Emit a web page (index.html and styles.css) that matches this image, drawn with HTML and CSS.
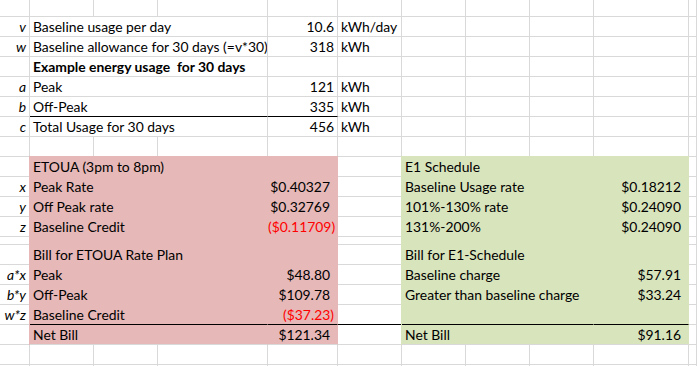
FILE: index.html
```html
<!DOCTYPE html>
<html>
<head>
<meta charset="utf-8">
<link rel="stylesheet" href="styles.css">
</head>
<body>
<div class="sheet">
  <!-- row 0 (partial) -->
  <div class="c"></div><div class="c"></div><div class="c"></div><div class="c"></div><div class="c"></div><div class="c"></div><div class="c"></div><div class="c"></div><div class="c"></div><div class="c"></div><div class="c"></div>

  <div class="c lbl">v</div><div class="c txt span3">Baseline usage per day</div><div class="c num">10.6</div><div class="c txt">kWh/day</div><div class="c"></div><div class="c"></div><div class="c"></div><div class="c"></div><div class="c"></div>

  <div class="c lbl">w</div><div class="c txt span3">Baseline allowance for 30 days (=v*30)</div><div class="c num">318</div><div class="c txt">kWh</div><div class="c"></div><div class="c"></div><div class="c"></div><div class="c"></div><div class="c"></div>

  <div class="c lbl"></div><div class="c txt span3 bold">Example energy usage&nbsp; for 30 days</div><div class="c num"></div><div class="c"></div><div class="c"></div><div class="c"></div><div class="c"></div><div class="c"></div><div class="c"></div>

  <div class="c lbl">a</div><div class="c txt span3">Peak</div><div class="c num">121</div><div class="c txt">kWh</div><div class="c"></div><div class="c"></div><div class="c"></div><div class="c"></div><div class="c"></div>

  <div class="c lbl">b</div><div class="c txt span3 under">Off-Peak</div><div class="c num under">335</div><div class="c txt">kWh</div><div class="c"></div><div class="c"></div><div class="c"></div><div class="c"></div><div class="c"></div>

  <div class="c lbl">c</div><div class="c txt span3">Total Usage for 30 days</div><div class="c num">456</div><div class="c txt">kWh</div><div class="c"></div><div class="c"></div><div class="c"></div><div class="c"></div><div class="c"></div>

  <div class="c"></div><div class="c"></div><div class="c"></div><div class="c"></div><div class="c"></div><div class="c"></div><div class="c"></div><div class="c"></div><div class="c"></div><div class="c"></div><div class="c"></div>

  <!-- ETOUA / E1 blocks -->
  <div class="c lbl"></div><div class="c txt span3 pink edge-l edge-t">ETOUA (3pm to 8pm)</div><div class="c pink edge-t end"></div><div class="c"></div><div class="c txt span3 green edge-l edge-t">E1 Schedule</div><div class="c green edge-t end"></div><div class="c"></div>

  <div class="c lbl">x</div><div class="c txt span3 pink edge-l">Peak Rate</div><div class="c money pink end">$0.40327</div><div class="c"></div><div class="c txt span3 green edge-l">Baseline Usage rate</div><div class="c money green end">$0.18212</div><div class="c"></div>

  <div class="c lbl">y</div><div class="c txt span3 pink edge-l">Off Peak rate</div><div class="c money pink end">$0.32769</div><div class="c"></div><div class="c txt span3 green edge-l">101%-130% rate</div><div class="c money green end">$0.24090</div><div class="c"></div>

  <div class="c lbl">z</div><div class="c txt span3 pink edge-l">Baseline Credit</div><div class="c money neg pink end">($0.11709)</div><div class="c"></div><div class="c txt span3 green edge-l">131%-200%</div><div class="c money green end">$0.24090</div><div class="c"></div>

  <div class="c"></div><div class="c span3 pink edge-l"></div><div class="c pink end"></div><div class="c"></div><div class="c span3 green edge-l"></div><div class="c green end"></div><div class="c"></div>

  <div class="c lbl"></div><div class="c txt span3 pink edge-l">Bill for ETOUA Rate Plan</div><div class="c pink end"></div><div class="c"></div><div class="c txt span3 green edge-l">Bill for E1-Schedule</div><div class="c green end"></div><div class="c"></div>

  <div class="c lbl">a*x</div><div class="c txt span3 pink edge-l">Peak</div><div class="c money pink end">$48.80</div><div class="c"></div><div class="c txt span3 green edge-l">Baseline charge</div><div class="c money green end">$57.91</div><div class="c"></div>

  <div class="c lbl">b*y</div><div class="c txt span3 pink edge-l">Off-Peak</div><div class="c money pink end">$109.78</div><div class="c"></div><div class="c txt span3 green edge-l">Greater than baseline charge</div><div class="c money green end">$33.24</div><div class="c"></div>

  <div class="c lbl">w*z</div><div class="c txt span3 pink edge-l under">Baseline Credit</div><div class="c money neg pink end under">($37.23)</div><div class="c under"></div><div class="c txt span3 green edge-l under"></div><div class="c green end under"></div><div class="c"></div>

  <div class="c lbl"></div><div class="c txt span3 pink edge-l last">Net Bill</div><div class="c money pink end last">$121.34</div><div class="c"></div><div class="c txt span3 green edge-l last">Net Bill</div><div class="c money green end last">$91.16</div><div class="c"></div>

  <div class="c"></div><div class="c"></div><div class="c"></div><div class="c"></div><div class="c"></div><div class="c"></div><div class="c"></div><div class="c"></div><div class="c"></div><div class="c"></div><div class="c"></div>

  <div class="c"></div><div class="c"></div><div class="c"></div><div class="c"></div><div class="c"></div><div class="c"></div><div class="c"></div><div class="c"></div><div class="c"></div><div class="c"></div><div class="c"></div>
</div>
</body>
</html>
```

FILE: styles.css
```css
html, body {
  margin: 0;
  padding: 0;
  background: #ffffff;
  overflow: hidden;
}

.sheet {
  display: grid;
  grid-template-columns: 30px 64px 64px 110px 70px 64px 64px 64px 64px 95px 1fr;
  grid-template-rows: 17px repeat(11, 20px) 8px repeat(7, 20px);
  width: 697px;
  height: 366px;
  overflow: hidden;
  font-family: Lato, "Open Sans", sans-serif;
  font-size: 13.9px;
  color: #000000;
}

.c {
  box-sizing: border-box;
  border-right: 1px solid #d9d9d9;
  border-bottom: 1px solid #d9d9d9;
  line-height: 19px;
  white-space: nowrap;
  overflow: hidden;
  min-width: 0;
}

.span3 {
  grid-column: span 3;
}

.lbl {
  font-style: italic;
  text-align: right;
  padding-right: 3px;
}

.txt {
  padding-left: 3px;
}

.bold {
  font-weight: bold;
}

.num {
  text-align: right;
  padding-right: 3px;
}

.money {
  text-align: right;
  padding-right: 7px;
}

.money.neg {
  color: #ff0000;
  padding-right: 3px;
}

.pink {
  background: #e6b8b7;
  border-right-color: #e6b8b7;
  border-bottom-color: #e6b8b7;
}

.green {
  background: #d8e4bc;
  border-right-color: #d8e4bc;
  border-bottom-color: #d8e4bc;
}

.pink.edge-l {
  box-shadow: -1px 0 0 0 #e6b8b7;
}

.green.edge-l {
  box-shadow: -1px 0 0 0 #d8e4bc;
}

.pink.edge-t {
  box-shadow: 0 -1px 0 0 #e6b8b7;
}

.green.edge-t {
  box-shadow: 0 -1px 0 0 #d8e4bc;
}

.pink.edge-l.edge-t {
  box-shadow: -1px -1px 0 0 #e6b8b7, -1px 0 0 0 #e6b8b7, 0 -1px 0 0 #e6b8b7;
}

.green.edge-l.edge-t {
  box-shadow: -1px -1px 0 0 #d8e4bc, -1px 0 0 0 #d8e4bc, 0 -1px 0 0 #d8e4bc;
}

.under,
.pink.under,
.green.under {
  border-bottom-color: #000000;
}

.pink.last,
.green.last {
  border-bottom-color: #d9d9d9;
}
```
